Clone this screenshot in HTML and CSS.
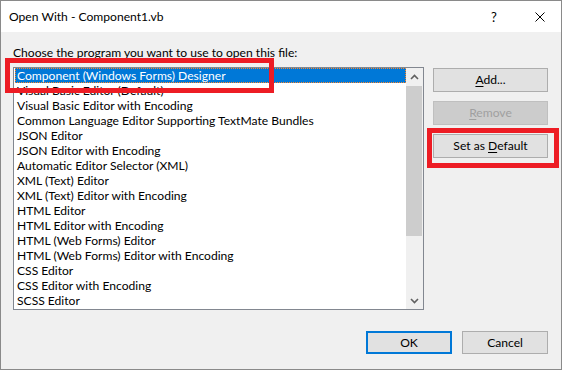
FILE: index.html
```html
<!DOCTYPE html>
<html>
<head>
<meta charset="utf-8">
<link rel="stylesheet" href="styles.css">
</head>
<body>
<div class="window">
  <div class="titlebar">
    <span class="title">Open With - Component1.vb</span>
    <div class="controls">
      <span class="help">?</span>
      <svg class="close" width="10" height="10" viewBox="0 0 10 10"><path d="M0.5 0.5 L9.5 9.5 M9.5 0.5 L0.5 9.5" stroke="#000" stroke-width="1" fill="none"/></svg>
    </div>
  </div>
  <div class="content">
    <div class="prompt">Choose the program you want to use to open this file:</div>
    <div class="main">
      <div class="listbox">
        <ul class="items">
          <li class="selected">Component (Windows Forms) Designer</li>
          <li>Visual Basic Editor (Default)</li>
          <li>Visual Basic Editor with Encoding</li>
          <li>Common Language Editor Supporting TextMate Bundles</li>
          <li>JSON Editor</li>
          <li>JSON Editor with Encoding</li>
          <li>Automatic Editor Selector (XML)</li>
          <li>XML (Text) Editor</li>
          <li>XML (Text) Editor with Encoding</li>
          <li>HTML Editor</li>
          <li>HTML Editor with Encoding</li>
          <li>HTML (Web Forms) Editor</li>
          <li>HTML (Web Forms) Editor with Encoding</li>
          <li>CSS Editor</li>
          <li>CSS Editor with Encoding</li>
          <li>SCSS Editor</li>
        </ul>
        <div class="scrollbar">
          <div class="arrow"><svg width="9" height="6" viewBox="0 0 9 6"><path d="M1 5 L4.5 1.5 L8 5" stroke="#606060" stroke-width="1.6" fill="none"/></svg></div>
          <div class="track"><div class="thumb"></div></div>
          <div class="arrow"><svg width="9" height="6" viewBox="0 0 9 6"><path d="M1 1 L4.5 4.5 L8 1" stroke="#606060" stroke-width="1.6" fill="none"/></svg></div>
        </div>
      </div>
      <div class="side">
        <button class="btn"><u>A</u>dd...</button>
        <button class="btn disabled"><u>R</u>emove</button>
        <button class="btn">Set as <u>D</u>efault</button>
      </div>
    </div>
    <div class="footer">
      <button class="btn ok">OK</button>
      <button class="btn">Cancel</button>
    </div>
  </div>
  <div class="mark mark-item"></div>
  <div class="mark mark-default"></div>
</div>
</body>
</html>
```
FILE: styles.css
```css
* { box-sizing: border-box; }
html, body { margin: 0; padding: 0; background: #f0f0f0; }
body {
  font-family: Lato, "Noto Sans", sans-serif;
  font-size: 12.1px;
  color: #000;
}
.window {
  position: relative;
  width: 562px;
  height: 370px;
  border: 1px solid #8a8a8a;
  background: #f0f0f0;
  display: flex;
  flex-direction: column;
}
.titlebar {
  height: 31px;
  background: #fff;
  display: flex;
  align-items: center;
  justify-content: space-between;
  padding-left: 8px;
}
.title { line-height: 31px; }
.controls { display: flex; align-items: center; height: 31px; }
.help { font-size: 13px; width: 14px; margin-right: 34px; text-align: center; }
.close { display: block; margin-right: 16px; }
.content {
  flex: 1;
  padding: 13px 12px 0 12px;
  display: flex;
  flex-direction: column;
}
.prompt { line-height: 15px; height: 15px; margin-bottom: 7px; }
.main { display: flex; gap: 9px; }
.listbox {
  width: 411px;
  height: 243px;
  border: 1px solid #828790;
  background: #fff;
  display: flex;
}
.items {
  list-style: none;
  margin: 0;
  padding: 0 0 0 1px;
  flex: 1;
  overflow: hidden;
}
.items li {
  height: 15px;
  line-height: 15px;
  padding-left: 2px;
  white-space: nowrap;
}
.items li.selected {
  background: #0078d7;
  color: #fff;
  outline: 1px dotted #ff8728;
  outline-offset: -1px;
}
.scrollbar {
  width: 17px;
  background: #f0f0f0;
  display: flex;
  flex-direction: column;
}
.arrow {
  height: 17px;
  display: flex;
  align-items: center;
  justify-content: center;
}
.arrow svg { display: block; }
.track { flex: 1; padding: 1px 1px 0 0; }
.thumb { height: 150px; background: #cdcdcd; }
.side {
  display: flex;
  flex-direction: column;
  gap: 9px;
  padding-top: 1px;
}
.btn {
  font-family: inherit;
  font-size: 12.1px;
  color: #000;
  background: #e1e1e1;
  border: 1px solid #adadad;
  width: 115px;
  height: 24px;
  padding: 0;
  line-height: 20px;
  text-align: center;
}
.btn u { text-underline-offset: 2px; }
.btn.disabled {
  background: #cccccc;
  border-color: #bfbfbf;
  color: #a0a0a0;
}
.footer {
  display: flex;
  justify-content: flex-end;
  gap: 10px;
  margin-top: 21px;
  padding-right: 1px;
}
.footer .btn { width: 86px; height: 23px; }
.btn.ok { border: 2px solid #0078d7; }
.mark {
  position: absolute;
  border: 5px solid #ed1c24;
  pointer-events: none;
}
.mark-item { left: 4px; top: 57px; width: 269px; height: 35px; }
.mark-default { left: 426px; top: 127px; width: 132px; height: 40px; }
```
